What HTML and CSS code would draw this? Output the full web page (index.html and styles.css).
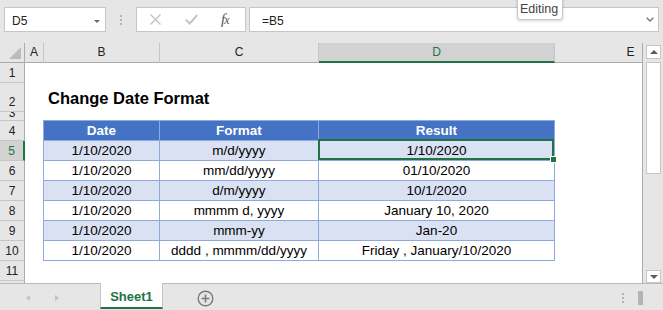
FILE: index.html
```html
<!DOCTYPE html>
<html lang="en">
<head>
    <meta charset="UTF-8">
    <meta name="viewport" content="width=device-width, initial-scale=1.0">
    <title>Change Date Format</title>
    <link rel="stylesheet" href="styles.css">
</head>
<body>
    <div class="app">
        <div class="formula-bar">
            <div class="name-box">D5<span class="caret-down"></span></div>
            <div class="grip"><i></i><i></i><i></i></div>
            <div class="fx-buttons">
                <svg class="btn-cancel" width="11" height="11" viewBox="0 0 11 11">
                    <path d="M0.5 0.5 L10.5 10.5 M10.5 0.5 L0.5 10.5" stroke="#c3c3c3" stroke-width="1.4" fill="none"/>
                </svg>
                <svg class="btn-enter" width="13" height="11" viewBox="0 0 13 11">
                    <path d="M0.8 5.6 L4.6 9.6 L12.2 1" stroke="#c3c3c3" stroke-width="2" fill="none"/>
                </svg>
                <span class="fx">f<span>x</span></span>
            </div>
            <div class="formula-input">
                =B5
                <svg class="chevron" width="8" height="5" viewBox="0 0 8 5">
                    <path d="M0.7 0.7 L4 4 L7.3 0.7" stroke="#777" stroke-width="1.4" fill="none"/>
                </svg>
            </div>
            <div class="tooltip">Editing</div>
        </div>

        <div class="sheet-wrap">
            <div class="sheet">
                <div class="col-heads">
                    <div class="col-head corner"><span class="corner-tri"></span></div>
                    <div class="col-head col-a">A</div>
                    <div class="col-head col-b">B</div>
                    <div class="col-head col-c">C</div>
                    <div class="col-head col-d active">D</div>
                    <div class="col-head col-e">E</div>
                </div>
                <div class="sheet-body">
                    <div class="row-heads">
                        <div class="row-head">1</div>
                        <div class="row-head tall">2</div>
                        <div class="row-head short">3</div>
                        <div class="row-head">4</div>
                        <div class="row-head active">5</div>
                        <div class="row-head">6</div>
                        <div class="row-head">7</div>
                        <div class="row-head">8</div>
                        <div class="row-head">9</div>
                        <div class="row-head">10</div>
                        <div class="row-head">11</div>
                        <div class="row-head rest"></div>
                    </div>
                    <div class="cells">
                        <div class="gap-row"></div>
                        <div class="title-row">Change Date Format</div>
                        <div class="gap-row short"></div>
                        <div class="table">
                            <div class="th">Date</div>
                            <div class="th">Format</div>
                            <div class="th">Result</div>

                            <div class="band">1/10/2020</div>
                            <div class="band">m/d/yyyy</div>
                            <div class="band sel">1/10/2020</div>

                            <div>1/10/2020</div>
                            <div>mm/dd/yyyy</div>
                            <div>01/10/2020</div>

                            <div class="band">1/10/2020</div>
                            <div class="band">d/m/yyyy</div>
                            <div class="band">10/1/2020</div>

                            <div>1/10/2020</div>
                            <div>mmmm d, yyyy</div>
                            <div>January 10, 2020</div>

                            <div class="band">1/10/2020</div>
                            <div class="band">mmm-yy</div>
                            <div class="band">Jan-20</div>

                            <div>1/10/2020</div>
                            <div>dddd , mmmm/dd/yyyy</div>
                            <div>Friday , January/10/2020</div>
                        </div>
                    </div>
                </div>
            </div>
            <div class="vscroll">
                <div class="scroll-btn"><span class="tri-up"></span></div>
                <div class="scroll-thumb"></div>
                <div class="scroll-btn bottom"><span class="tri-down"></span></div>
            </div>
        </div>

        <div class="tab-bar">
            <div class="sheet-nav">
                <span class="nav-prev"></span>
                <span class="nav-next"></span>
            </div>
            <div class="sheet-tab">Sheet1</div>
            <svg class="add-sheet" width="17" height="17" viewBox="0 0 17 17">
                <circle cx="8.5" cy="8.5" r="7.3" stroke="#7a7a7a" stroke-width="1.4" fill="none"/>
                <path d="M8.5 4.6 V12.4 M4.6 8.5 H12.4" stroke="#7a7a7a" stroke-width="1.6"/>
            </svg>
            <div class="tab-end">
                <div class="grip small"><i></i><i></i><i></i></div>
                <div class="split-bar"></div>
            </div>
        </div>
    </div>
</body>
</html>
```

FILE: styles.css
```css
body {
    margin: 0;
    font-family: "Liberation Sans", Arial, sans-serif;
    background-color: #e6e6e6;
}
.app {
    width: 663px;
    height: 310px;
    overflow: hidden;
    display: flex;
    flex-direction: column;
}

/* formula bar */
.formula-bar {
    height: 43px;
    flex: none;
    box-sizing: border-box;
    padding: 7px 4px 0 4px;
    display: flex;
    align-items: flex-start;
    position: relative;
}
.name-box {
    width: 102px;
    height: 25px;
    box-sizing: border-box;
    background-color: white;
    border: 1px solid #c6c6c6;
    padding: 2px 0 0 7px;
    display: flex;
    align-items: center;
    font-size: 12px;
    color: #222;
    position: relative;
}
.caret-down {
    position: absolute;
    right: 5px;
    top: 12px;
    border-top: 3px solid #6a6a6a;
    border-left: 3px solid transparent;
    border-right: 3px solid transparent;
}
.grip {
    display: flex;
    flex-direction: column;
    gap: 2px;
    margin: 8px 14px 0 14px;
}
.grip i {
    width: 2px;
    height: 2px;
    background-color: #b4b4b4;
}
.fx-buttons {
    width: 110px;
    height: 25px;
    box-sizing: border-box;
    background-color: white;
    border: 1px solid #c6c6c6;
    display: flex;
    align-items: center;
    padding-left: 13px;
}
.btn-enter {
    margin-left: 24px;
}
.fx {
    margin-left: 23px;
    font-family: "Liberation Serif", serif;
    font-style: italic;
    font-size: 15px;
    color: #555;
    letter-spacing: -1px;
}
.fx span {
    font-size: 12px;
}
.formula-input {
    flex: 1;
    margin-left: 3px;
    height: 25px;
    box-sizing: border-box;
    background-color: white;
    border: 1px solid #c6c6c6;
    padding: 2px 0 0 12px;
    display: flex;
    align-items: center;
    font-size: 12px;
    color: #222;
    position: relative;
}
.chevron {
    position: absolute;
    right: 4px;
    top: 9px;
}
.tooltip {
    position: absolute;
    left: 517px;
    top: -5px;
    height: 25px;
    box-sizing: border-box;
    padding: 6px 4px 0 2px;
    background-color: white;
    border: 1px solid #c8c8c8;
    border-radius: 3px;
    box-shadow: 0 1px 3px rgba(0,0,0,0.18);
    font-size: 12.5px;
    line-height: 15px;
    color: #444;
}

/* grid */
.sheet-wrap {
    height: 240px;
    flex: none;
    display: flex;
}
.sheet {
    width: 643px;
    flex: none;
    box-sizing: border-box;
    border-right: 1px solid #ababab;
    display: flex;
    flex-direction: column;
    overflow: hidden;
}
.col-heads {
    height: 20px;
    flex: none;
    display: flex;
}
.col-head {
    flex: none;
    box-sizing: border-box;
    height: 20px;
    border-right: 1px solid #c6c6c6;
    border-bottom: 1px solid #ababab;
    font-size: 12px;
    line-height: 19px;
    text-align: center;
    color: #222;
}
.corner {
    width: 25px;
    border-right-color: #ababab;
    display: flex;
    justify-content: flex-end;
    align-items: flex-end;
    padding: 0 3px 3px 0;
}
.corner-tri {
    width: 0;
    height: 0;
    border-left: 12px solid transparent;
    border-bottom: 12px solid #bcbcbc;
}
.col-a { width: 19px; }
.col-b { width: 116px; }
.col-c { width: 159px; }
.col-d { width: 236px; }
.col-e { width: 152px; }
.col-head.active {
    background-color: #d2d2d2;
    border-bottom: 2px solid #217346;
    line-height: 18px;
    color: #217346;
}
.sheet-body {
    flex: 1;
    display: flex;
    min-height: 0;
}
.row-heads {
    width: 25px;
    flex: none;
    display: flex;
    flex-direction: column;
}
.row-head {
    flex: none;
    height: 20px;
    box-sizing: border-box;
    border-bottom: 1px solid #c6c6c6;
    border-right: 1px solid #ababab;
    padding-bottom: 3px;
    display: flex;
    justify-content: center;
    align-items: flex-end;
    overflow: hidden;
    font-size: 12px;
    line-height: 12px;
    color: #222;
}
.row-head.tall { height: 29px; }
.row-head.short { height: 9px; padding-bottom: 1px; }
.row-head.rest {
    flex: 1;
    border-bottom: none;
}
.row-head.active {
    background-color: #d2d2d2;
    border-right: 2px solid #217346;
    color: #217346;
}
.cells {
    flex: 1;
    background-color: white;
    display: flex;
    flex-direction: column;
}
.gap-row {
    height: 20px;
    flex: none;
}
.gap-row.short { height: 8px; }
.title-row {
    height: 29px;
    flex: none;
    box-sizing: border-box;
    padding: 5px 0 0 23px;
    font-size: 16.5px;
    line-height: 20px;
    font-weight: bold;
    color: #000;
}
.table {
    margin-left: 18px;
    width: max-content;
    display: grid;
    grid-template-columns: 116px 159px 236px;
    border-left: 1px solid #8ea9db;
    border-top: 1px solid #8ea9db;
    font-size: 13.5px;
    color: #000;
}
.table div {
    height: 20px;
    box-sizing: border-box;
    border-right: 1px solid #8ea9db;
    border-bottom: 1px solid #8ea9db;
    padding-top: 2px;
    line-height: 16px;
    text-align: center;
    white-space: nowrap;
}
.table .th {
    background-color: #4472c4;
    color: white;
    font-weight: bold;
}
.table .band {
    background-color: #d9e1f2;
}
.table .sel {
    position: relative;
}
.table .sel::after {
    content: '';
    position: absolute;
    top: -2px;
    left: -1px;
    right: 0;
    bottom: 0;
    border: 2px solid #217346;
}
.table .sel::before {
    content: '';
    position: absolute;
    right: -2px;
    bottom: -2px;
    width: 5px;
    height: 5px;
    background-color: #217346;
    box-shadow: 0 0 0 1px white;
    z-index: 1;
}

/* vertical scrollbar */
.vscroll {
    flex: 1;
    display: flex;
    flex-direction: column;
    padding: 2px 2px 0 3px;
}
.scroll-btn {
    height: 14px;
    box-sizing: border-box;
    background-color: white;
    border: 1px solid #c6c6c6;
    display: flex;
    justify-content: center;
    align-items: center;
}
.scroll-btn.bottom {
    margin-top: auto;
    height: 13px;
}
.tri-up {
    border-bottom: 4px solid #5a5a5a;
    border-left: 4px solid transparent;
    border-right: 4px solid transparent;
}
.tri-down {
    border-top: 4px solid #5a5a5a;
    border-left: 4px solid transparent;
    border-right: 4px solid transparent;
}
.scroll-thumb {
    margin-top: 3px;
    height: 112px;
    box-sizing: border-box;
    background-color: white;
    border: 1px solid #c6c6c6;
}

/* sheet tabs */
.tab-bar {
    flex: 1;
    box-sizing: border-box;
    border-top: 1px solid #b9b9b9;
    display: flex;
    align-items: flex-start;
}
.sheet-nav {
    width: 100px;
    flex: none;
    display: flex;
    padding-top: 11px;
}
.nav-prev {
    margin-left: 26px;
    border-right: 4px solid #c2c2c2;
    border-top: 3px solid transparent;
    border-bottom: 3px solid transparent;
}
.nav-next {
    margin-left: 25px;
    border-left: 4px solid #c2c2c2;
    border-top: 3px solid transparent;
    border-bottom: 3px solid transparent;
}
.sheet-tab {
    width: 63px;
    height: 26px;
    margin-top: -1px;
    box-sizing: border-box;
    background-color: white;
    border-left: 1px solid #c6c6c6;
    border-right: 1px solid #c6c6c6;
    border-bottom: 2px solid #217346;
    padding-top: 5px;
    text-align: center;
    font-size: 13px;
    line-height: 18px;
    font-weight: bold;
    color: #217346;
}
.add-sheet {
    margin: 6px 0 0 34px;
}
.tab-end {
    margin-left: auto;
    margin-right: 20px;
    display: flex;
    align-items: flex-start;
}
.grip.small {
    margin: 9px 0 0 0;
}
.split-bar {
    width: 5px;
    height: 14px;
    margin: 7px 0 0 14px;
    background-color: #b4b4b4;
}
```
